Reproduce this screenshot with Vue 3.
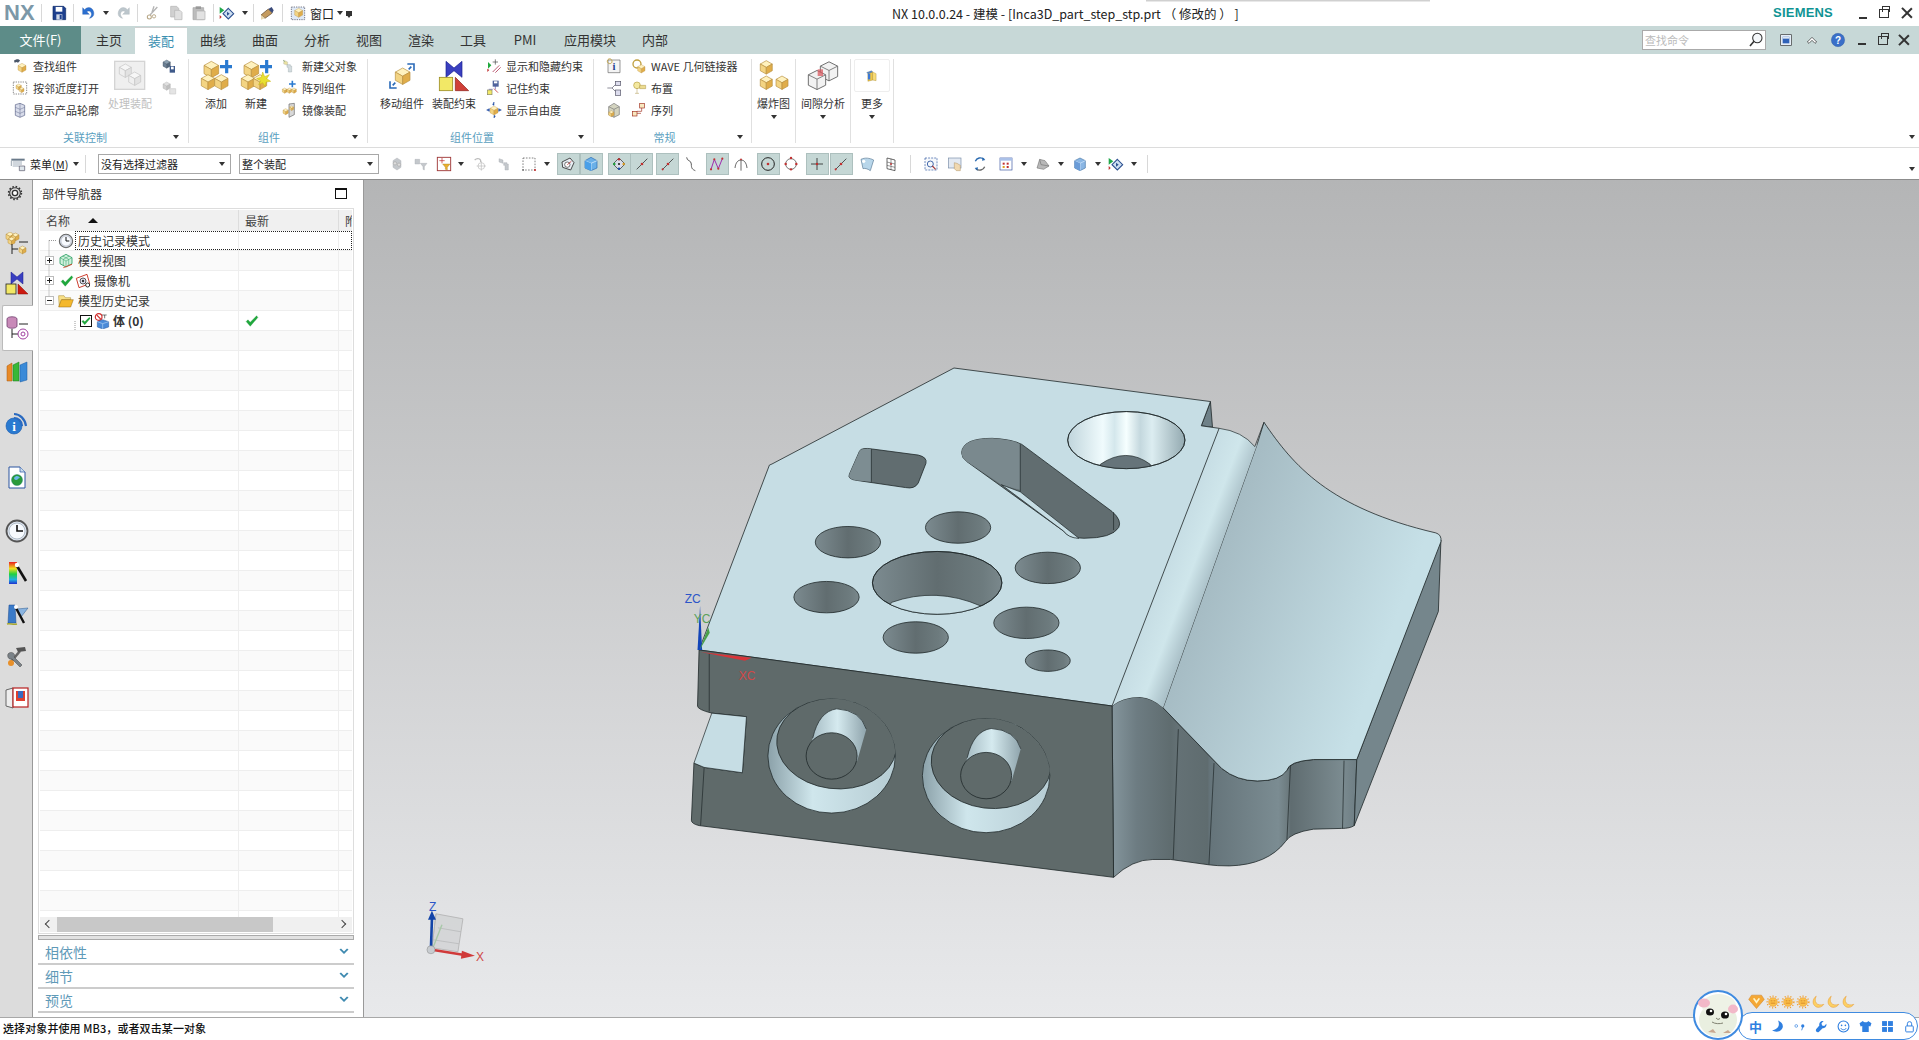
<script setup>
import { h } from 'vue'

const P = (d, f = 'none', s = 'none', w = 1) => `<path d="${d}" fill="${f}" stroke="${s}" stroke-width="${w}"/>`
const C = (x, y, r, f = 'none', s = 'none', w = 1) => `<circle cx="${x}" cy="${y}" r="${r}" fill="${f}" stroke="${s}" stroke-width="${w}"/>`
const cube = (x, y, s, t = '#fff2bf', l = '#f3d483', r = '#e0ad4a', e = '#b8903f') =>
  P(`M${x} ${y + s * 0.28}L${x + s * 0.5} ${y}L${x + s} ${y + s * 0.28}L${x + s * 0.5} ${y + s * 0.56}Z`, t, e, 0.5) +
  P(`M${x} ${y + s * 0.28}L${x + s * 0.5} ${y + s * 0.56}V${y + s * 1.12}L${x} ${y + s * 0.84}Z`, l, e, 0.5) +
  P(`M${x + s} ${y + s * 0.28}L${x + s * 0.5} ${y + s * 0.56}V${y + s * 1.12}L${x + s} ${y + s * 0.84}Z`, r, e, 0.5)
const gcube = (x, y, s) => cube(x, y, s, '#f6f6f6', '#efefef', '#e2e2e2', '#c4c4c4')
const wire = (cx, cy, s, e = '#666') =>
  P(`M${cx - s / 2} ${cy - s * 0.3}L${cx} ${cy - s * 0.55}L${cx + s / 2} ${cy - s * 0.3}V${cy + s * 0.3}L${cx} ${cy + s * 0.55}L${cx - s / 2} ${cy + s * 0.3}Z`, '#f2f2f2', e, 0.7) +
  P(`M${cx - s / 2} ${cy - s * 0.3}L${cx} ${cy - s * 0.05}L${cx + s / 2} ${cy - s * 0.3}M${cx} ${cy - s * 0.05}V${cy + s * 0.55}`, 'none', e, 0.6)
const plus = (x, y) => P(`M${x - 1.2} ${y - 5}h2.4v3.8h3.8v2.4h-3.8v3.8h-2.4v-3.8h-3.8v-2.4h3.8z`, '#2a7ad0')
const bowtie = P('M6 1l6 5 6-5v12l-6-5-6 5z', '#3a3fc0', '#1a1f90', 0.5)
const check = P('M2 13l3-3 4 4L20 3l2 3L9 21z', '#1fa83c', '#0f8a2a', 0.5)
const gy = (d) => P(d, '#c4c8cc', '#a8acb0', 0.6)

const I = {
  save: P('M3 2h16l3 3v17H3z', '#1d3f8e', '#0d2a66') + P('M7 3h10v7H7z', '#fff') + P('M8 14h9v8H8z', '#cfd8e8') + P('M13 15h3v6h-3z', '#1d3f8e'),
  undo: P('M4 4v10h10l-4-4c3-2 6-1 7 2 1 3-1 6-3 8 6-1 8-6 6-11-2-6-9-7-13-2z', '#2b6fd0', '#1a4fa0', 0.5),
  redo: '<g transform="matrix(-1 0 0 1 24 0)">' + P('M4 4v10h10l-4-4c3-2 6-1 7 2 1 3-1 6-3 8 6-1 8-6 6-11-2-6-9-7-13-2z', '#bcc6cc', '#a4aeb4', 0.5) + '</g>',
  cut: P('M20 3L9 15M15 2l-3 9', 'none', '#b4b4b4', 2) + C(8, 18, 3, 'none', '#b8a888', 1.6) + C(15, 17, 2.5, 'none', '#b8a888', 1.4),
  copy: P('M4 2h9l3 3v13H4z', '#d0d0d0', '#b4b4b4') + P('M10 8h8l3 3v11H10z', '#e0e0e0', '#b4b4b4'),
  paste: P('M3 4h16v18H3z', '#bcbcbc', '#a4a4a4') + P('M7 2h8v4H7z', '#999') + P('M8 9h13v13H8z', '#e2e2e2', '#b0b0b0'),
  sel: P('M14 5l8 8-8 8-8-8z', '#cfe0f2', '#2b4f8f', 1.6) + P('M1 3l7 5-7 5z', '#22a84a') + P('M1 15l3 3-3 3z', '#c03030') + P('M12 10l4 3-4 3z', '#2b4f8f'),
  brush: P('M3 15L14 6l6 6-11 8z', '#c49a5c', '#5a4428') + P('M14 6l5-3 3 5-2 4z', '#3a4a7a') + P('M3 15l6 5-6 2z', '#e8d8b0'),
  win: '<rect x="2" y="3" width="20" height="19" fill="#dfe9f6" stroke="#445" stroke-width="1" stroke-dasharray="2 1.5"/>' + cube(7, 5, 12),
  search: C(14, 9, 7, '#f4f7fa', '#333', 1.6) + P('M9 14l-6 7', 'none', '#333', 2.4),
  restoreWin: '<rect x="4" y="4" width="16" height="16" fill="#e6eef8" stroke="#333"/><rect x="7" y="7" width="10" height="10" fill="#2f62b8"/><rect x="7" y="7" width="10" height="3" fill="#dce6f4"/>',
  up: P('M5 15l7-7 7 7-2.5 2L12 12.5 7.5 17z', '#fff', '#222', 1),
  help: C(12, 12, 10, '#3a6fc8', '#2a55a0', 0.6) + '<text x="12" y="17.5" text-anchor="middle" font-size="15" font-weight="700" font-family="Liberation Sans" fill="#fff">?</text>',
  find: cube(9, 8, 12) + P('M3 4c3-3 8-3 9 0l-3 3-2-1-3 1z', '#4a5668'),
  prox: '<rect x="2" y="3" width="20" height="18" fill="none" stroke="#555" stroke-dasharray="2 1.5"/>' + cube(6, 6, 8) + cube(11, 11, 7),
  outline: P('M5 4l7-2 7 3v15l-7 3-7-3z', '#d8dcea', '#5a6488', 1) + P('M12 2v21M5 8l7 3 7-3M5 14l7 3 7-3', 'none', '#5a6488', 0.7),
  proc: '<rect x="0.5" y="1" width="22.5" height="21" fill="#efefef" stroke="#d4d4d4"/>' + gcube(4, 3, 9) + gcube(11, 9, 9),
  cam1: cube(3, 3, 11, '#8ca0b0', '#6c8094', '#54687c', '#3a4a5a') + '<rect x="13" y="12" width="8" height="10" fill="#3f5a8a"/><rect x="15" y="13" width="4" height="4" fill="#fff"/>',
  cam2: cube(3, 3, 11, '#e0e0e0', '#d0d0d0', '#c0c0c0', '#aaa') + P('M13 13h9v8h-9z', '#e4e4e4', '#ccc'),
  addBig: cube(3, 1, 11) + cube(1, 11, 10) + cube(11, 11, 10) + plus(20, 5),
  newBig: cube(3, 1, 11) + cube(1, 11, 10) + cube(10, 11, 10) + plus(20, 5) + P('M17 9l1.5 3.5L22 11l-2 3 3 2-3.5.5L19 20l-2-3-3 1.5 1.5-3-3-1.5 3.5-1z', '#e8e030', '#c8b818', 0.4),
  parent: P('M4 3l6 3v5l-6-2z', '#e8e0a0', '#aaa', 0.5) + P('M9 10h5v2h2v9h-5v-7H9z', '#d4dce0', '#9aa', 0.6) + P('M3 3l3 3', 'none', '#8a8', 1),
  array: cube(2, 12, 7) + cube(9, 12, 7) + cube(16, 12, 7) + plus(17, 6),
  mirror: cube(3, 10, 8) + P('M12 3l8-1v17l-8 4z', '#d8d8d8', '#666') + cube(13, 6, 6),
  move: P('M16 3h5v5M3 16v5h5', 'none', '#2a6ab8', 1.2) + P('M19 5l-2 2M5 19l2-2', 'none', '#2a6ab8', 1.2) + cube(7, 6, 11),
  cons: bowtie + '<rect x="1" y="13" width="10" height="10" fill="#f2e866" stroke="#998a20" stroke-width="0.6"/>' + P('M13 13l10 10H13z', '#d04038', '#8a2018', 0.5),
  showc: P('M3 6l5 5-5 5z', '#1fa83c') + P('M2 16l3 2-3 3z', '#c03030') + P('M14 2v8M10 6h8', 'none', '#444', 1) + P('M10 21l10-10M14 22l8-8', 'none', '#b8506a', 1.4),
  rem: '<rect x="10" y="1" width="9" height="9" fill="#50649c"/><rect x="12" y="2" width="5" height="3" fill="#fff"/>' + P('M4 14h6M14 8v6', 'none', '#55a', 1) + '<rect x="2" y="15" width="7" height="7" fill="#f2e866" stroke="#886"/>' + P('M12 13l6 6', 'none', '#c03030', 1.2),
  dof: cube(6, 6, 12) + P('M12 0v5l-2-1zM1 12l4-2v4zM23 12l-4 2v-4zM12 24v-4l2 1z', '#2a55a8', '#2a55a8', 0.8),
  info: P('M3 3h18v19H3z', '#f4f4f4', '#666') + '<text x="12" y="18" text-anchor="middle" font-size="16" font-weight="700" font-family="Liberation Serif" fill="#1f3f8e">i</text>' + P('M2 5c0-5 7-5 7 0s-7 4-7 0z', 'none', '#c0a040', 1.4),
  wave: C(9, 9, 6, 'none', '#c0a040', 2) + cube(10, 10, 11),
  link: P('M2 12h7M9 12l6-6M9 12l6 6', 'none', '#556', 1) + '<rect x="14" y="2" width="8" height="6" fill="#dde" stroke="#556"/><rect x="14" y="15" width="8" height="8" fill="#dde" stroke="#556"/>',
  layout: C(9, 8, 5, '#f3e8a0', '#b8a040') + P('M9 12v8M6 20h6M13 8h9v5h-9z', '#ecdc90', '#a89040', 0.7),
  pack: P('M4 7l8-5 8 5v12l-8 4-8-4z', '#d4d4c0', '#777') + P('M4 7l8 4 8-4M12 11v12', 'none', '#777') + cube(4, 13, 8),
  seq: '<rect x="13" y="2" width="7" height="7" fill="#f8e8c0" stroke="#a03020"/><rect x="2" y="14" width="7" height="7" fill="#f8e8c0" stroke="#a03020"/>' + P('M16 9v5h-7M9 17h6', 'none', '#a03020', 1),
  expl: cube(1.7, 0.5, 9) + cube(1.7, 12, 9) + cube(13.5, 12, 9),
  clear: wire(16.5, 8.5, 13) + wire(7.5, 15, 13) + '<rect x="8" y="7" width="4" height="5" fill="#d85a60" opacity=".75"/>',
  more: P('M5 8l8-3v14l-8 2z', '#f2c744', '#a08020', 0.7) + P('M5 8l-2-2 8-3 2 2z', '#5a8ad0', '#356', 0.5) + P('M13 5l6 3v12l-6-1z', '#f8dc78', '#a08020', 0.6) + P('M5 8h4v10H5z', '#3a78d8'),
  menu: P('M2 4h20v3H2z', '#6a7a8a') + P('M4 9h14M4 12h14M4 15h10', 'none', '#8a9aaa', 1.2) + P('M14 15h8v7h-8z', '#dfe6ec', '#556') + P('M2 7v8', 'none', '#6a7a8a', 1),
  t1: gy('M6 7l6-4 6 4v10l-6 4-6-4z') + C(9, 11, 2.5, '#ddd', '#aaa') + C(15, 13, 2.5, '#ddd', '#aaa'),
  t2: gy('M3 5h7v7H3zM11 11h10l-4 5v5l-2-1v-4z'),
  t3: '<rect x="2" y="2" width="20" height="20" fill="#fff" stroke="#a03a3a" stroke-width="1.4"/>' + P('M10 12h11l-4 5v4l-3-1v-3z', '#e8b030', '#a07010', 0.5) + P('M9 3v8M5 7h8', 'none', '#c03030', 1.1),
  t4: P('M4 6c4-4 10-2 9 3', 'none', '#bbb', 1.8) + C(14, 15, 5, 'none', '#bbb', 1) + P('M14 8v14M7 15h14', 'none', '#bbb', 1),
  t5: gy('M3 4l6 2v5l-6-2z') + gy('M10 10h5v2h2v9h-5v-7h-2z'),
  t6: '<rect x="3" y="3" width="18" height="18" fill="none" stroke="#444" stroke-dasharray="2.4 2"/>' + C(21, 21, 1.6, '#c03030') + C(3, 21, 1.4, '#777'),
  t7: P('M3 9l12-6 6 7-5 11-12-4z', '#e8eef4', '#333', 1.3) + C(11, 13, 4, '#fff', '#333') + P('M11 13l6-5', 'none', '#c03030', 1.2),
  t8: P('M3 7l9-5 9 5v11l-9 4-9-4z', '#6ab0e8', '#2a6ab0', 1) + P('M12 11l9-4M12 11L3 7M12 11v11', 'none', '#eaf6ff', 1) + P('M3 7l9 4v11l-9-4z', '#4aa0e8', 'none'),
  t9: P('M12 3l9 9-9 9-9-9z', '#d8dce8', '#222', 1) + C(12, 5, 1.8, '#c03030') + C(5, 12, 1.8, '#1fa83c') + C(19, 12, 1.8, '#e0a020') + C(12, 19, 1.8, '#2050b0') + C(12, 12, 1.6, '#222'),
  l1: P('M4 20L20 4', 'none', '#333', 1.2) + C(12, 12, 2, '#c03030'),
  l2: P('M4 20L20 4', 'none', '#333', 1.2) + C(12, 12, 2, '#c03030') + C(4, 20, 1.6, '#c03030'),
  curve: P('M7 2c0 6 7 4 7 10s1 8 6 10', 'none', '#444', 1.3),
  zig: P('M3 20L8 5l6 14 6-15', 'none', '#a02bb0', 1.5) + C(3, 20, 1.6, '#c03030') + C(8, 5, 1.6, '#c03030') + C(14, 19, 1.6, '#c03030') + C(20, 4, 1.6, '#c03030'),
  arcp: P('M3 18c1-9 5-12 9-12s8 3 9 12M12 6v16', 'none', '#444', 1.2) + C(12, 5, 1.4, '#c03030'),
  circ: C(12, 12, 9.5, 'none', '#222', 1.5) + C(12, 12, 2, '#c03030'),
  circ2: C(12, 12, 8, 'none', '#555', 1.2) + C(12, 3, 1.8, '#c03030') + C(4, 12, 1.8, '#c03030') + C(20, 12, 1.8, '#c03030') + C(12, 20, 1.8, '#c03030'),
  cross: P('M12 3v18M3 12h18', 'none', '#222', 1.2) + C(12, 12, 1.8, '#c03030'),
  surf: P('M3 5c6-3 13-2 19 1l-5 16c-4-3-9-4-11-3z', '#b8d6ea', '#5a7a96') + C(7, 8, 2.5, '#fff'),
  grid: P('M6 3l12 3v16L6 19z', '#fff', '#444', 1.2) + P('M12 4v17M6 9l12 3M6 14l12 3', 'none', '#444', 0.8) + C(12, 12, 1.4, '#c03030'),
  v1: '<rect x="3" y="3" width="18" height="18" fill="#f6f8fb" stroke="#2a55a0" stroke-dasharray="3 1.6"/>' + C(11, 12, 4.5, 'none', '#2a55a0', 1.3) + P('M14 15l5 5', 'none', '#a03030', 1.6),
  v2: '<rect x="2" y="3" width="19" height="15" fill="#e3e9f2" stroke="#7a8ea8"/>' + P('M11 10v9l3 3h6v-8l-5-3z', '#f0d8b0', '#a08050', 0.6),
  v3: P('M5 8a8 8 0 0 1 13-3', 'none', '#2a6ab0', 2) + P('M19 16a8 8 0 0 1-13 3', 'none', '#666', 2) + P('M16 2l4 4-5 1zM8 22l-4-4 5-1z', '#2a6ab0'),
  v4: '<rect x="3" y="3" width="18" height="18" fill="#fff" stroke="#3a55a0"/><rect x="3" y="3" width="18" height="4" fill="#aac0e8"/><rect x="7" y="10" width="3" height="3" fill="#c03030"/><rect x="13" y="10" width="3" height="3" fill="#c03030"/><rect x="7" y="15" width="3" height="3" fill="#e0a020"/><rect x="13" y="15" width="3" height="3" fill="#c03030"/>',
  v5: P('M3 18l4-13 8 2 6 8-8 5z', '#b8b8b8', '#666', 0.8) + P('M7 5l2 8 12 2', 'none', '#666', 0.8),
  v6: P('M4 7l8-4 8 4v11l-8 4-8-4z', '#8ab6e4', '#4a78a8') + P('M4 7l8 4 8-4M12 11v11', 'none', '#d8ecff') + P('M4 7l8 4v11l-8-4z', '#6a9cd8'),
  gear: C(12, 12, 4, '#fff', '#333', 2) + C(12, 12, 8, 'none', '#333', 1.6) + '<circle cx="12" cy="12" r="9.6" fill="none" stroke="#333" stroke-width="2.4" stroke-dasharray="2.4 2.6"/>',
  rAsm: cube(1, 0, 8) + cube(7, 1, 7) + cube(3, 5, 7) + P('M7 12v10M7 17h6M14 10h9', 'none', '#222', 1) + cube(14, 14, 7),
  rCon: bowtie + '<rect x="1" y="13" width="10" height="10" fill="#f2e866" stroke="#222" stroke-width="0.8"/>' + P('M13 13l10 10H13z', '#cc1a10', '#8a1008', 0.5),
  rPart: P('M2 3c0-3 10-3 10 0v7c0 3-10 3-10 0z', '#c88ab8', '#704070', 0.8) + P('M7 13v9M7 18h6M14 8h9', 'none', '#222', 1) + C(18, 18, 5, 'none', '#a040a0', 1) + C(18, 18, 2, 'none', '#a040a0', 1),
  rBooks: P('M2 6l5-3v18H2z', '#e88a28', '#a85a10', 0.5) + P('M8 5l6-3v19H8z', '#38b838', '#1a7a1a', 0.5) + P('M15 5l7-3v18l-7 2z', '#3a8ad8', '#1a5aa0', 0.5),
  rInfo: C(9, 15, 8, '#2a7ad0', '#1a5ab0', 0.6) + '<text x="9" y="20" text-anchor="middle" font-size="13" font-weight="700" font-family="Liberation Serif" fill="#fff">i</text>' + P('M9 3c6 0 11 5 12 12M9 7c4 0 8 3 8 8', 'none', '#2a6ac0', 2.2),
  rDoc: P('M4 2h11l5 5v16H4z', '#fff', '#2a55a0', 1) + P('M15 2v5h5', '#cde', '#2a55a0', 0.7) + C(12, 15, 5.5, '#2a9a3a', '#176', 0.4) + P('M9 13c2-3 5-2 6 0-2 0-2 2-4 2-1 0-2-1-2-2z', '#6ab8e8'),
  rClock: C(12, 12, 10.5, '#dfe6f0', '#555', 1.8) + C(12, 12, 8, '#f7fafe', '#8a9aaa', 0.6) + P('M12 6v6h6', 'none', '#111', 1.6),
  rColor: '<defs><linearGradient id="rc" x1="0" y1="0" x2="0" y2="1"><stop offset="0" stop-color="#e82020"/><stop offset=".3" stop-color="#f0e020"/><stop offset=".55" stop-color="#20d040"/><stop offset=".8" stop-color="#20b0e0"/><stop offset="1" stop-color="#2030d0"/></linearGradient></defs><rect x="4" y="1" width="8" height="22" fill="url(#rc)"/>' + P('M12 5l9 15', 'none', '#111', 2.6) + C(12, 4, 2.2, '#fff'),
  rBlue: P('M4 2h6l1 18H3z', '#3a7ac8', '#1a4a90', 0.5) + P('M12 6l11-1-7 9z', '#8ab4e0', '#2a5a90', 0.5) + P('M11 5l8 15', 'none', '#111', 2.4) + C(11, 4, 2, '#fff') + P('M2 21c3-1 6 1 10 0', 'none', '#a8a830', 1.4),
  rTools: P('M5 18l10-12', 'none', '#666', 2.6) + P('M11 3l9-1 1 4-8 1z', '#555') + P('M4 8c4-2 7 2 5 4l8 8-2 2-8-8c-3 1-5-2-4-5z', '#7a8288', '#444', 0.5) + C(6, 18, 3, '#e8902a'),
  rDoor: P('M1 4l7-2v20l-7-2z', '#eee', '#666') + '<rect x="8" y="2" width="15" height="19" fill="#fff" stroke="#b82020" stroke-width="1.2"/><rect x="11" y="5" width="9" height="10" fill="#e04030"/><rect x="13" y="5" width="5" height="7" fill="#3a6ac0"/>',
  clock: C(12, 12, 10, '#d4dce6', '#666', 1.6) + C(12, 12, 7.5, '#f8fbff', '#99a', 0.6) + P('M12 6v6h5', 'none', '#111', 1.5),
  mview: P('M12 2l9 5v9l-9 5-9-5V7z', '#d0f0dc', '#1f9a5a', 1.2) + P('M3 7l9 5 9-5M12 12v9M7 4.5l9 5v9M17 4.5l-9 5v9', 'none', '#1f9a5a', 0.7) + P('M8 22l13-5', 'none', '#d84830', 1.4),
  check,
  cam: P('M2 8l16-6 4 14-16 6z', '#fff', '#c83020', 1.4) + C(12, 12, 4.5, '#e0e0f0', '#333', 1.2) + C(12, 12, 1.8, '#333') + C(19, 18, 3, '#fff', '#111', 1.3),
  folder: P('M1 8V4h8l2 3h8v3H6L2 21z', '#f8e088', '#a08020', 0.7) + P('M5 10h18l-4 11H1z', '#f4b82c', '#8a6010', 0.7),
  body: C(7, 6, 5, '#fff', '#d03030', 1.8) + P('M4 3l6 6', 'none', '#d03030', 1.6) + P('M12 3h7M16 3v5', 'none', '#333', 1) + P('M5 13l8-3 9 3v8l-9 3-8-3z', '#4a8ad8', '#1f4f98', 0.7) + P('M5 13l8 3 9-3M13 16v8', 'none', '#c8e0f8', 0.8),
  chev: P('M3 7l9 9 9-9-3-2-6 6-6-6z', '#3f8ab0'),
  diamond: P('M5 3h14l4 6-11 13L1 9z', '#f5a835', '#c87818', 0.6) + P('M7 8l5 7 5-7-2-1-3 4-3-4z', '#fff6c8'),
  sun: C(12, 12, 7.5, '#fbc04a', '#e88a20', 0.8) + '<circle cx="12" cy="12" r="10" fill="none" stroke="#f0a030" stroke-width="2.4" stroke-dasharray="2 3"/>' + P('M8 10h3M13 10h3M8 14h8', 'none', '#c87018', 1.1),
  moon: P('M9 2c-5 9 1 18 13 14-4 6-12 7-16 2C2 14 3 6 9 2z', '#fcd064', '#e89a30', 0.9),
  bMoon: P('M13 1c4 9 0 16-11 18 5 4 15 4 19-4 3-6-2-12-8-14z', '#2f7fe0'),
  bDots: C(6, 11, 2.5, 'none', '#2f7fe0', 1.2) + C(18, 11, 3, '#2f7fe0') + P('M18 13l-2 6', 'none', '#2f7fe0', 1.6),
  wrench: P('M21 7l-4 4-4-1-1-4 4-4c-5-1-9 3-8 8L2 17c-2 3 2 7 5 5l7-7c4 1 8-3 7-8z', '#2f7fe0'),
  smile: C(12, 12, 10, '#fff', '#2f7fe0', 2) + C(8.5, 10, 1.5, '#2f7fe0') + C(15.5, 10, 1.5, '#2f7fe0') + P('M7 15c2 4 8 4 10 0', 'none', '#2f7fe0', 1.8),
  shirt: P('M7 2L1 6l2 6 3-1v11h12V11l3 1 2-6-6-4c-1 3-8 3-10 0z', '#2f7fe0'),
  tiles: '<rect x="2" y="2" width="9" height="9" fill="#2f7fe0"/><rect x="13" y="2" width="9" height="9" fill="#2f7fe0"/><rect x="2" y="13" width="9" height="9" fill="#2f7fe0"/><rect x="13" y="13" width="9" height="9" fill="#2f7fe0"/>',
  lock: '<rect x="5" y="11" width="14" height="11" rx="1.5" fill="none" stroke="#2f7fe0" stroke-width="1.8"/>' + P('M8 11V7a4 4 0 0 1 8 0v4', 'none', '#2f7fe0', 1.8)
}
const Ico = (p) => h('svg', { viewBox: '0 0 24 24', class: 'ico', innerHTML: I[p.n] })

const flow = (items, base = 0) => {
  let end = base
  return items.map((it) => {
    const w = it.sep ? 1 : it.dd ? 7 : it.w || 16
    const left = it.x - w / 2
    const m = left - end
    end = left + w
    return { ...it, w, m }
  })
}
const quick = flow([
  { x: 41.5, sep: 1 }, { x: 59, n: 'save' }, { x: 73, sep: 1 }, { x: 88, n: 'undo' }, { x: 106, dd: 1 }, { x: 124, n: 'redo' }, { x: 137.5, sep: 1 },
  { x: 152, n: 'cut' }, { x: 175.5, n: 'copy' }, { x: 199, n: 'paste' }, { x: 213, sep: 1 }, { x: 227, n: 'sel' }, { x: 245, dd: 1 },
  { x: 253, sep: 1 }, { x: 267, n: 'brush' }, { x: 282, sep: 1 }, { x: 298, n: 'win' }
], 41)
const tools = flow([
  { x: 398, n: 't1' }, { x: 422, n: 't2' }, { x: 445, n: 't3' }, { x: 462, dd: 1 }, { x: 481, n: 't4' }, { x: 506, n: 't5' }, { x: 530, n: 't6' }, { x: 548, dd: 1 },
  { x: 569, n: 't7', on: 1, w: 23 }, { x: 592, n: 't8', on: 1, w: 23 }, { x: 620, n: 't9', on: 1, w: 23 }, { x: 642.5, n: 'l1', on: 1, w: 23 }, { x: 668.5, n: 'l2', on: 1, w: 23 },
  { x: 691, n: 'curve' }, { x: 718, n: 'zig', on: 1, w: 23 }, { x: 742, n: 'arcp' }, { x: 769, n: 'circ', on: 1, w: 23 }, { x: 792, n: 'circ2' },
  { x: 818, n: 'cross', on: 1, w: 23 }, { x: 842, n: 'l2', on: 1, w: 23 }, { x: 868, n: 'surf' }, { x: 892, n: 'grid' }, { x: 911, sep: 1 },
  { x: 932, n: 'v1' }, { x: 956, n: 'v2' }, { x: 981, n: 'v3' }, { x: 1007, n: 'v4' }, { x: 1025, dd: 1 }, { x: 1044, n: 'v5' }, { x: 1061.5, dd: 1 },
  { x: 1081, n: 'v6' }, { x: 1099, dd: 1 }, { x: 1117, n: 'sel' }, { x: 1135, dd: 1 }, { x: 1148, sep: 1 }
], 380)
const tabs = [
  { t: '主页' }, { t: '装配', on: 1 }, { t: '曲线' }, { t: '曲面' }, { t: '分析' }, { t: '视图' }, { t: '渲染' }, { t: '工具' }, { t: 'PMI' }, { t: '应用模块', wide: 1 }, { t: '内部' }
]
const railTop = [193, 244, 283, 328, 372, 423, 477, 531, 573, 615, 657, 698]
const railNames = ['gear', 'rAsm', 'rCon', 'rPart', 'rBooks', 'rInfo', 'rDoc', 'rClock', 'rColor', 'rBlue', 'rTools', 'rDoor']
const rail = railTop.map((y, i) => {
  const size = i === 0 ? 16 : 24
  const prev = i === 0 ? 180 : railTop[i - 1] + (i === 1 ? 8 : 12)
  return { n: railNames[i], size, m: y - size / 2 - prev, on: i === 3, icon: i > 0 }
})
const emptyRows = Array.from({ length: 30 }, (_, i) => i)
const sections = ['相依性', '细节', '预览']
const stars = ['sun', 'sun', 'sun', 'moon', 'moon', 'moon']
</script>

<template>
  <div class="app">
    <div class="shadow-strip"></div>
    <header class="titlebar">
      <span class="nx">NX</span>
      <span class="strip">
        <span v-for="(it, i) in quick" :key="i" class="slot" :class="{ sep: it.sep, dd: it.dd }" :style="{ marginLeft: it.m + 'px', width: it.w + 'px' }">
          <Ico v-if="it.n" :n="it.n" />
        </span>
      </span>
      <span class="win-label">窗口</span>
      <span class="slot dd win-dd"></span>
      <span class="more-dd"></span>
      <span class="title">NX 10.0.0.24 - 建模 - [Inca3D_part_step_stp.prt （ 修改的 ） ]</span>
      <span class="siemens">SIEMENS</span>
      <span class="winbtns top">
        <span class="w-min"></span><span class="w-res"></span><span class="w-x"></span>
      </span>
    </header>

    <nav class="tabs">
      <span class="tab-file">文件(F)</span>
      <span v-for="t in tabs" :key="t.t" class="tab" :class="{ on: t.on, wide: t.wide }">{{ t.t }}</span>
      <span class="tabs-right">
        <span class="searchbox"><span class="ph">查找命令</span><Ico n="search" /></span>
        <Ico n="restoreWin" class="tr1" />
        <Ico n="up" class="tr2" />
        <Ico n="help" class="tr3" />
        <span class="winbtns second">
          <span class="w-min"></span><span class="w-res"></span><span class="w-x"></span>
        </span>
      </span>
    </nav>

    <section class="ribbon">
      <div class="grp g1">
        <div class="gbody">
          <div class="col c1">
            <div class="row"><Ico n="find" /><span>查找组件</span></div>
            <div class="row"><Ico n="prox" /><span>按邻近度打开</span></div>
            <div class="row"><Ico n="outline" /><span>显示产品轮廓</span></div>
          </div>
          <div class="bigbtn disabled w44"><Ico n="proc" class="big" /><span>处理装配</span></div>
          <div class="col c1b">
            <div class="row"><Ico n="cam1" /></div>
            <div class="row"><Ico n="cam2" /></div>
          </div>
        </div>
        <div class="glabel"><span class="gt">关联控制</span><i class="arrow"></i></div>
      </div>
      <i class="gsep"></i>
      <div class="grp g2">
        <div class="gbody">
          <div class="bigbtn w40 first"><Ico n="addBig" class="big" /><span>添加</span></div>
          <div class="bigbtn w40"><Ico n="newBig" class="big" /><span>新建</span></div>
          <div class="col c2">
            <div class="row"><Ico n="parent" /><span>新建父对象</span></div>
            <div class="row"><Ico n="array" /><span>阵列组件</span></div>
            <div class="row"><Ico n="mirror" /><span>镜像装配</span></div>
          </div>
        </div>
        <div class="glabel"><span class="gt">组件</span><i class="arrow"></i></div>
      </div>
      <i class="gsep"></i>
      <div class="grp g3">
        <div class="gbody">
          <div class="bigbtn w52 first"><Ico n="move" class="big" /><span>移动组件</span></div>
          <div class="bigbtn w52"><Ico n="cons" class="big" /><span>装配约束</span></div>
          <div class="col c3">
            <div class="row"><Ico n="showc" /><span>显示和隐藏约束</span></div>
            <div class="row"><Ico n="rem" /><span>记住约束</span></div>
            <div class="row"><Ico n="dof" /><span>显示自由度</span></div>
          </div>
        </div>
        <div class="glabel"><span class="gt">组件位置</span><i class="arrow"></i></div>
      </div>
      <i class="gsep"></i>
      <div class="grp g4">
        <div class="gbody">
          <div class="col c4a">
            <div class="row"><Ico n="info" /></div>
            <div class="row"><Ico n="link" /></div>
            <div class="row"><Ico n="pack" /></div>
          </div>
          <div class="col c4b">
            <div class="row"><Ico n="wave" /><span>WAVE 几何链接器</span></div>
            <div class="row"><Ico n="layout" /><span>布置</span></div>
            <div class="row"><Ico n="seq" /><span>序列</span></div>
          </div>
        </div>
        <div class="glabel"><span class="gt">常规</span><i class="arrow"></i></div>
      </div>
      <i class="gsep"></i>
      <div class="bigbtn g5"><Ico n="expl" class="big" /><span>爆炸图</span><i class="arrow"></i></div>
      <i class="gsep"></i>
      <div class="bigbtn g6"><Ico n="clear" class="big" /><span>间隙分析</span><i class="arrow"></i></div>
      <i class="gsep"></i>
      <div class="bigbtn g7"><span class="morebox"><Ico n="more" /></span><span>更多</span><i class="arrow"></i></div>
      <i class="gsep"></i>
      <i class="arrow far"></i>
    </section>

    <section class="toolbar">
      <Ico n="menu" class="tb-menu" />
      <span class="tb-menu-label">菜单(<u>M</u>)</span>
      <i class="arrow tb-a"></i>
      <i class="tb-sep"></i>
      <span class="select s1">没有选择过滤器<i class="arrow"></i></span>
      <span class="select s2">整个装配<i class="arrow"></i></span>
      <span v-for="(it, i) in tools" :key="i" class="slot tool" :class="{ sep: it.sep, dd: it.dd, on: it.on }" :style="{ marginLeft: it.m + 'px', width: it.w + 'px' }">
        <Ico v-if="it.n" :n="it.n" />
      </span>
      <i class="arrow far"></i>
    </section>

    <main class="main">
      <aside class="rail">
        <span v-for="r in rail" :key="r.n" class="rbtn" :class="{ on: r.on, shifted: r.icon }" :style="{ marginTop: r.m + 'px', height: r.size + 'px' }">
          <Ico :n="r.n" :style="{ width: r.size + 'px', height: r.size + 'px' }" />
        </span>
      </aside>

      <div class="panel">
        <div class="ptitle"><span>部件导航器</span><i class="maxbox"></i></div>
        <div class="ptable">
          <div class="thead">
            <span class="th"><span>名称</span><i class="sort"></i></span>
            <span class="th">最新</span>
            <span class="th last">附</span>
          </div>
          <div class="tbody">
            <svg class="treelines" width="70" height="100">
              <path d="M9 9.5H17M9 9.5V70M35 90V101H41" fill="none" stroke="#999" stroke-dasharray="1 1" />
            </svg>
            <div class="tr sel">
              <span class="td"><span class="cell p18"><Ico n="clock" /><span class="lbl">历史记录模式</span></span></span>
              <span class="td"></span><span class="td"></span>
              <i class="dotted"></i>
            </div>
            <div class="tr alt">
              <span class="td"><span class="cell p5"><i class="exp plus"></i><Ico n="mview" /><span class="lbl">模型视图</span></span></span>
              <span class="td"></span><span class="td"></span>
            </div>
            <div class="tr">
              <span class="td"><span class="cell p5"><i class="exp plus"></i><Ico n="check" class="i14" /><Ico n="cam" /><span class="lbl tight">摄像机</span></span></span>
              <span class="td"></span><span class="td"></span>
            </div>
            <div class="tr alt">
              <span class="td"><span class="cell p5"><i class="exp"></i><Ico n="folder" /><span class="lbl">模型历史记录</span></span></span>
              <span class="td"></span><span class="td"></span>
            </div>
            <div class="tr">
              <span class="td"><span class="cell p40"><span class="chk"><Ico n="check" /></span><Ico n="body" /><span class="lbl strong">体 (0)</span></span></span>
              <span class="td"><Ico n="check" class="i14 col2" /></span><span class="td"></span>
            </div>
            <div v-for="i in emptyRows" :key="i" class="tr" :class="{ alt: i % 2 === 0 }">
              <span class="td"></span><span class="td"></span><span class="td"></span>
            </div>
          </div>
          <div class="hscroll">
            <span class="sc-l"></span>
            <span class="thumb"></span>
            <span class="sc-r"></span>
          </div>
        </div>
        <div class="sash"></div>
        <div v-for="s in sections" :key="s" class="psec"><span>{{ s }}</span><Ico n="chev" /></div>
      </div>

      <div class="viewport">
        <svg class="canvas" viewBox="0 0 1556 837">
          <defs>
            <linearGradient id="gFace" gradientUnits="userSpaceOnUse" x1="985" y1="1030" x2="1352" y2="1126">
              <stop offset="0" stop-color="#a6bcc4" /><stop offset="1" stop-color="#c6e0e7" />
            </linearGradient>
            <linearGradient id="gStrip" gradientUnits="userSpaceOnUse" x1="885" y1="1025" x2="980" y2="1050">
              <stop offset="0" stop-color="#c6dde4" /><stop offset=".55" stop-color="#cfe6eb" /><stop offset="1" stop-color="#a8bec6" />
            </linearGradient>
            <linearGradient id="gSide" gradientUnits="userSpaceOnUse" x1="885" y1="0" x2="1365" y2="0">
              <stop offset="0" stop-color="#84959c" /><stop offset=".1" stop-color="#6d7c82" /><stop offset=".24" stop-color="#5f6c6f" />
              <stop offset=".27" stop-color="#647175" /><stop offset=".39" stop-color="#5f6c6f" /><stop offset=".4" stop-color="#65747a" />
              <stop offset=".68" stop-color="#7b8c92" /><stop offset=".72" stop-color="#6c7a7e" /><stop offset=".73" stop-color="#5f6c70" />
              <stop offset=".94" stop-color="#7b8b90" /><stop offset="1" stop-color="#6e7e84" />
            </linearGradient>
            <linearGradient id="gHole">
              <stop offset="0" stop-color="#7c8b90" /><stop offset=".5" stop-color="#616d70" /><stop offset=".85" stop-color="#6d7b7e" /><stop offset="1" stop-color="#7a888c" />
            </linearGradient>
            <linearGradient id="gCone">
              <stop offset="0" stop-color="#c0d5dc" /><stop offset=".3" stop-color="#f0fbfd" /><stop offset=".4" stop-color="#d4e7ec" />
              <stop offset=".5" stop-color="#f6ffff" /><stop offset=".62" stop-color="#c4d8de" /><stop offset=".72" stop-color="#dcedf1" /><stop offset="1" stop-color="#93a9b0" />
            </linearGradient>
            <linearGradient id="gBore" x1="0" y1="0" x2="1" y2="0">
              <stop offset="0" stop-color="#8ba1a9" /><stop offset=".35" stop-color="#cfe6ec" /><stop offset="1" stop-color="#b6ccd3" />
            </linearGradient>
            <linearGradient id="gStub">
              <stop offset="0" stop-color="#a0b6be" /><stop offset=".5" stop-color="#d5eaef" /><stop offset="1" stop-color="#8fa4ac" />
            </linearGradient>
            <clipPath id="cb"><ellipse cx="335" cy="1165" rx="125" ry="160" /></clipPath>
            <clipPath id="ch"><ellipse cx="542" cy="680" rx="127" ry="88" /></clipPath>
            <clipPath id="cc"><ellipse cx="913" cy="280" rx="115" ry="80" /></clipPath>
          </defs>
          <g class="model" transform="translate(297 160) scale(.5102 .35714)">
            <path class="e" fill="url(#gSide)" d="M885 1025Q905 1000 940 1000Q965 1003 985 1030L1100 1200Q1130 1235 1170 1235Q1215 1235 1228 1205Q1232 1180 1280 1175L1365 1175L1360 1360Q1352 1368 1335 1368L1280 1370Q1235 1380 1225 1405Q1190 1470 1115 1473Q1090 1473 1075 1470L1000 1455L965 1455Q925 1455 888 1505Z" />
            <path class="e" fill="#75868c" d="M1365 1175L1530 560L1525 760L1360 1360Z" />
            <path class="t" d="M1015 1090L1005 1455M1085 1185L1075 1470M1235 1190L1228 1400M1340 1178L1337 1368" />
            <path class="e" fill="url(#gFace)" d="M1183 230C1240 350 1310 470 1520 540Q1532 545 1530 565L1365 1175L1280 1175Q1232 1180 1228 1205Q1215 1235 1170 1235Q1130 1235 1100 1200L985 1030L1170 290Z" />
            <path fill="url(#gStrip)" d="M1095 247Q1140 255 1165 298L1170 290L985 1030Q965 1003 940 1000Q905 1000 885 1025Z" />
            <path class="t" d="M1095 247Q1140 255 1165 298L1183 230" />
            <path class="e" fill="#6f8188" d="M1078 172L1082 244L1060 240Z" />
            <path class="e" fill="#c6dde4" d="M75 868L213 350L218 347L575 78L1078 172L1060 240L1095 247L885 1025Z" />

            <path class="e" fill="#5f6a6a" d="M75 868L885 1025L888 1505L75 1360Q60 1355 60 1345L65 1185L85 1197L160 1212L168 1055L100 1045Q72 1035 72 1025Z" />
            <path fill="#c6dde4" class="t" d="M100 1045L168 1055L160 1212L85 1197L65 1185Z" />
            <path class="t" d="M95 878L95 1040M85 1197L78 1360" />

            <g v-for="dx in [0, 303]" :key="dx" :transform="`translate(${dx} ${dx ? 55 : 0})`">
              <ellipse class="e" cx="335" cy="1165" rx="125" ry="160" fill="url(#gBore)" />
              <g clip-path="url(#cb)">
                <ellipse class="e" cx="345" cy="1130" rx="117" ry="128" fill="#5f6a6a" transform="rotate(-14 345 1130)" />
              </g>
              <path fill="url(#gStub)" d="M298 1115Q310 1040 345 1033Q392 1037 403 1090L385 1180L290 1160Z" />
              <path class="t" d="M298 1115Q310 1040 345 1033Q392 1037 403 1090" />
              <ellipse class="e" cx="335" cy="1165" rx="50" ry="65" fill="#5f6a6a" />
            </g>

            <ellipse class="e hole" cx="367" cy="566" rx="64" ry="44" fill="url(#gHole)" />
            <ellipse class="e hole" cx="583" cy="525" rx="64" ry="44" fill="url(#gHole)" />
            <ellipse class="e hole" cx="759" cy="638" rx="64" ry="44" fill="url(#gHole)" />
            <ellipse class="e hole" cx="325" cy="720" rx="64" ry="44" fill="url(#gHole)" />
            <ellipse class="e hole" cx="717" cy="792" rx="64" ry="44" fill="url(#gHole)" />
            <ellipse class="e hole" cx="500" cy="833" rx="64" ry="44" fill="url(#gHole)" />
            <ellipse class="e hole" cx="759" cy="898" rx="44" ry="30" fill="url(#gHole)" />

            <ellipse class="e" cx="542" cy="680" rx="127" ry="88" fill="url(#gHole)" />
            <g clip-path="url(#ch)">
              <path class="t" fill="#c6dde4" d="M452 735Q540 690 628 745L640 780L440 780Z" />
            </g>
            <ellipse cx="542" cy="680" rx="127" ry="88" fill="none" class="e" />

            <path class="e" fill="#616d70" d="M390 310Q395 300 415 305L505 322Q523 328 520 345L505 400Q498 418 480 413L385 393Q365 390 370 375Z" />
            <path fill="#7d8d92" d="M390 310Q395 302 413 305L413 397L385 393Q365 390 370 375Z" />
            <path class="t" d="M413 305V397" />

            <path class="e" fill="#616d70" d="M590 315Q592 275 650 275Q690 278 708 292L885 480Q905 505 898 525Q885 555 830 555Q800 555 790 535L600 340Q590 330 590 315Z" />
            <path fill="#7a898e" d="M590 315Q592 275 650 275Q690 278 705 292L705 420L668 405L600 340Q590 330 590 315Z" />
            <path class="t" fill="#c6dde4" d="M668 405L705 425L820 555Q800 555 790 535Z" />
            <path class="t" d="M705 292V425M888 482V532" />

            <ellipse class="e" cx="913" cy="280" rx="115" ry="80" fill="url(#gCone)" />
            <g clip-path="url(#cc)">
              <path class="t" fill="#66747a" d="M862 348Q913 298 960 348L960 370L862 370Z" />
            </g>
            <ellipse cx="913" cy="280" rx="115" ry="80" fill="none" class="e" />

            <path fill="#1244b8" d="M72 868L77 745L81 868Z" />
            <path fill="#49a049" d="M76 868L93 805L96 820Z" />
            <path fill="#d8353a" d="M78 874L178 890L165 898Z" />
          </g>
          <text class="ax blue" x="321" y="423">ZC</text>
          <text class="ax green" x="330" y="443">YC</text>
          <text class="ax red" x="375" y="500">XC</text>

          <g transform="translate(-363 -180)">
            <path d="M435 914L462 919L457 952L431 948Z" fill="#cfd0d2" fill-opacity=".7" stroke="#aaa" stroke-width=".7" />
            <path d="M435 914L431 948M437 928L460 932M432 940L458 944" fill="none" stroke="#b4b6b8" stroke-width=".7" />
            <path d="M432 948L441 925" stroke="#a8c8a8" stroke-width="1.4" fill="none" />
            <path d="M430 948L431 919" stroke="#1244a8" stroke-width="2.6" fill="none" />
            <path d="M431 911L427 920H435Z" fill="#1244a8" />
            <path d="M431 950L462 955" stroke="#d03a3a" stroke-width="2.4" fill="none" />
            <path d="M474 956L461 951L460 959Z" fill="#d03a3a" />
            <circle cx="430" cy="950" r="4" fill="#c8ccd0" stroke="#888" stroke-width=".5" />
            <text class="ax blue" x="428" y="911">Z</text>
            <text class="ax red" x="475" y="961">X</text>
          </g>
        </svg>
      </div>
    </main>

    <footer class="status">选择对象并使用 MB3，或者双击某一对象</footer>

    <div class="ime">
      <div class="pill">
        <span class="zh">中</span>
        <Ico n="bMoon" /><Ico n="bDots" /><Ico n="wrench" /><Ico n="smile" /><Ico n="shirt" /><Ico n="tiles" /><Ico n="lock" />
      </div>
      <div class="stars">
        <Ico n="diamond" class="dia" />
        <Ico v-for="(s, i) in stars" :key="i" :n="s" class="star" />
      </div>
      <svg class="avatar" viewBox="0 0 52 52">
        <circle cx="26" cy="26" r="24" fill="#fff" stroke="#3f8be0" stroke-width="2" />
        <ellipse cx="26" cy="31" rx="19" ry="17" fill="#e9efe0" />
        <ellipse cx="27" cy="17" rx="17" ry="12" fill="#eef2e6" />
        <ellipse cx="12" cy="14" rx="6" ry="4.6" fill="#f2b8c8" />
        <ellipse cx="41" cy="20" rx="5" ry="4.4" fill="#f2b8c8" />
        <ellipse cx="18" cy="23" rx="4" ry="3.6" fill="#111" /><circle cx="19" cy="22" r="1.3" fill="#fff" />
        <ellipse cx="33" cy="26" rx="4" ry="3.6" fill="#111" /><circle cx="34" cy="25" r="1.3" fill="#fff" />
        <path d="M24 29l2 1.5 2-1M20 33c3 2 8 2 11 1" fill="none" stroke="#665" stroke-width=".8" />
        <path d="M16 43l5-3 3 4zM31 44l5-3 3 3z" fill="#c8a890" />
      </svg>
    </div>
  </div>
</template>

<style>
html, body { margin: 0; padding: 0; overflow: hidden; background: #fff; }
</style>

<style scoped>
.app {
  position: relative;
  width: 100%;
  height: 100vh;
  min-height: 1040px;
  display: flex;
  flex-direction: column;
  overflow: hidden;
  font-family: "Noto Sans CJK SC", "Open Sans", sans-serif;
  font-size: 11px;
  color: #333;
  background: #fff;
}
.ico { width: 16px; height: 16px; display: block; flex: none; }
.big { width: 32px; height: 32px; }
.arrow {
  display: inline-block;
  flex: none;
  width: 0; height: 0;
  border-left: 3.5px solid transparent;
  border-right: 3.5px solid transparent;
  border-top: 4px solid #333;
}
.shadow-strip {
  position: absolute; left: 1146px; top: 0; width: 284px; height: 2px;
  background: linear-gradient(#c4c4c4, #f4f4f4);
}

/* title bar */
.titlebar { height: 26px; flex: none; display: flex; align-items: center; background: #fff; }
.nx {
  width: 41px; padding-left: 4px; box-sizing: border-box;
  font: 700 22px/26px "Liberation Sans", sans-serif; color: #7c98a8;
}
.strip { display: flex; align-items: center; height: 26px; }
.slot { display: flex; align-items: center; justify-content: center; height: 18px; flex: none; }
.slot.sep { background: #d8d8d8; }
.slot.dd::after {
  content: ""; width: 0; height: 0;
  border-left: 3.5px solid transparent; border-right: 3.5px solid transparent; border-top: 4px solid #333;
}
.win-label { margin-left: 4px; font-size: 12px; color: #222; width: 24px; }
.win-dd { width: 7px; margin-left: 2px; }
.more-dd { margin-left: 3px; width: 6px; height: 1px; background: #333; border-bottom: 4px solid transparent; position: relative; }
.more-dd::after {
  content: ""; position: absolute; left: 0; top: 3px; width: 0; height: 0;
  border-left: 3px solid transparent; border-right: 3px solid transparent; border-top: 4px solid #333;
}
.title { margin-left: 540px; font-size: 12.5px; color: #222; white-space: nowrap; }
.siemens {
  margin-left: auto;
  font: 700 13px/26px "Liberation Sans", sans-serif; color: #0f9494; letter-spacing: .2px;
}
.winbtns { display: flex; align-items: center; position: relative; }
.winbtns.top { margin-left: 26px; width: 60px; height: 26px; }
.w-min { width: 8px; height: 2px; background: #333; margin-top: 9px; margin-right: 12px; }
.w-res { width: 10px; height: 9px; border: 1.5px solid #333; position: relative; margin-right: 12px; box-sizing: border-box; }
.w-res::before { content: ""; position: absolute; left: 2px; top: -4px; width: 8px; height: 6px; border: 1.5px solid #333; border-bottom: none; box-sizing: border-box; }
.w-x { position: relative; width: 12px; height: 12px; }
.w-x::before, .w-x::after { content: ""; position: absolute; left: 5px; top: -1px; width: 1.6px; height: 14px; background: #333; transform: rotate(45deg); }
.w-x::after { transform: rotate(-45deg); }

/* tabs */
.tabs { height: 28px; flex: none; display: flex; background: #c7d8d7; align-items: stretch; }
.tab-file {
  width: 81px; margin-right: 2px; background: #5d8c88; color: #fff;
  font-size: 13px; line-height: 27px; text-align: center;
}
.tab { width: 52px; text-align: center; font-size: 13px; line-height: 27px; color: #333; box-sizing: border-box; }
.tab.wide { width: 78px; }
.tab.on { background: #fff; color: #3a8fb0; margin-top: 1px; line-height: 25px; border-top: 1px solid #cfcfcf; }
.tabs-right { margin-left: auto; display: flex; align-items: center; padding-right: 9px; }
.searchbox {
  width: 124px; height: 20px; box-sizing: border-box; border: 1px solid #aaa; background: #fff;
  display: flex; align-items: center; justify-content: space-between; padding: 0 1px 0 2px;
}
.ph { color: #bbb; font-size: 11px; }
.tr1 { margin-left: 12px; }
.tr2 { margin-left: 10px; }
.tr3 { margin-left: 10px; }
.winbtns.second { margin-left: 12px; }
.winbtns.second .w-min { margin-top: 8px; margin-right: 12px; }
.winbtns.second .w-res { margin-right: 10px; }

/* ribbon */
.ribbon { height: 94px; box-sizing: border-box; flex: none; display: flex; background: #fff; border-bottom: 1px solid #dcdcdc; position: relative; padding-top: 1px; }
.gsep { flex: none; width: 1px; height: 84px; margin-top: 4px; background: #e0e0e0; }
.grp { flex: none; display: flex; flex-direction: column; }
.g1 { width: 188px; } .g2 { width: 178px; } .g3 { width: 225px; } .g4 { width: 157px; }
.gbody { height: 73px; display: flex; }
.glabel { display: flex; align-items: center; height: 20px; color: #5aa0c0; font-size: 11px; }
.gt { text-align: center; flex: none; }
.g1 .gt { width: 170px; } .g1 .arrow { margin-left: 3px; }
.g2 .gt { width: 160px; } .g2 .arrow { margin-left: 3px; }
.g3 .gt { width: 208px; } .g3 .arrow { margin-left: 2px; }
.g4 .gt { width: 141px; } .g4 .arrow { margin-left: 2px; }
.col { display: flex; flex-direction: column; flex: none; }
.row { height: 22px; display: flex; align-items: center; white-space: nowrap; }
.row span { margin-left: 5px; }
.c1 { width: 108px; padding-left: 12px; box-sizing: border-box; }
.c1b { margin-left: 9px; }
.c2 { margin-left: 5px; }
.c3 { margin-left: 6px; } .c3 .row span { margin-left: 4px; }
.c4a { margin-left: 12px; }
.c4b { margin-left: 9px; } .c4b .row span { margin-left: 4px; }
.bigbtn { flex: none; display: flex; flex-direction: column; align-items: center; padding-top: 5px; box-sizing: border-box; white-space: nowrap; line-height: 16px; }
.bigbtn > span:not(.morebox) { margin-top: 3px; }
.bigbtn > .arrow { margin-top: 4px; }
.w44 { width: 44px; } .w40 { width: 40px; } .w52 { width: 52px; }
.g2 .first { margin-left: 7px; }
.g3 .first { margin-left: 8px; }
.disabled { color: #c0c0c0; }
.g5 { width: 43px; } .g6 { width: 54px; } .g7 { width: 42px; }
.morebox {
  width: 36px; height: 33px; box-sizing: border-box; border: 1px solid #eee; border-radius: 2px;
  display: flex; align-items: center; justify-content: center; margin-top: -1px;
}
.morebox .ico { width: 14px; height: 14px; }
.ribbon .far { position: absolute; right: 4px; top: 81px; }

/* toolbar */
.toolbar { height: 32px; box-sizing: border-box; flex: none; display: flex; align-items: center; background: #fff; border-bottom: 1px solid #8c8c8c; position: relative; }
.tb-menu { margin-left: 10px; }
.tb-menu-label { margin-left: 4px; width: 40px; font-size: 11px; color: #222; white-space: nowrap; }
.tb-a { margin-left: 3px; }
.tb-sep { width: 1px; height: 18px; background: #d8d8d8; margin-left: 6px; }
.select {
  flex: none; height: 20px; box-sizing: border-box; border: 1px solid #a8a8a8; background: #fff;
  display: flex; align-items: center; justify-content: space-between; padding: 0 5px 0 2px; font-size: 11px; color: #222;
}
.s1 { width: 133px; margin-left: 12px; }
.s2 { width: 140px; margin-left: 8px; }
.tool { height: 22px; }
.tool.on { background: #c5d7d5; box-shadow: inset 0 0 0 1px #adc0be; }
.tool.sep { height: 18px; }
.toolbar .far { position: absolute; right: 4px; top: 19px; }

/* main */
.main { height: 837px; flex: none; display: flex; }
.rail { width: 32px; flex: none; background: #dcdcdc; display: flex; flex-direction: column; position: relative; z-index: 1; }
.rbtn { position: relative; width: 30px; display: flex; justify-content: center; flex: none; }
.rbtn.shifted { width: 34px; }
.rbtn .ico { position: relative; }
.rbtn.on::before {
  content: ""; position: absolute; left: 2px; right: 1px; top: -11px; bottom: -11px;
  background: #fff; border: 1px solid #bbb; border-right: none; border-radius: 2px 0 0 2px;
}
.panel {
  width: 332px; flex: none; box-sizing: border-box; background: #fff;
  border-left: 1px solid #999; border-right: 1px solid #999;
  padding: 0 9px 4px 5px; display: flex; flex-direction: column;
}
.ptitle { height: 27px; margin-bottom: 1px; flex: none; display: flex; align-items: center; justify-content: space-between; font-size: 12px; color: #333; padding: 0 7px 0 4px; }
.maxbox { width: 12px; height: 11px; box-sizing: border-box; border: 1px solid #111; border-top-width: 2px; }
.ptable { flex: 1; min-height: 0; box-sizing: border-box; border: 1px solid #ddd; padding: 1px; display: flex; flex-direction: column; overflow: hidden; }
.thead { height: 21px; flex: none; display: grid; grid-template-columns: 199px 100px 1fr; background: #f0f0f0; box-sizing: border-box; }
.th { display: flex; align-items: center; padding-left: 6px; font-size: 12px; color: #444; border-right: 1px solid #ddd; overflow: hidden; white-space: nowrap; }
.th.last { border-right: none; }
.sort { margin-left: 18px; width: 0; height: 0; border-left: 5px solid transparent; border-right: 5px solid transparent; border-bottom: 5px solid #111; }
.tbody { flex: 1; min-height: 0; overflow: hidden; position: relative; }
.treelines { position: absolute; left: 0; top: 0; z-index: 1; pointer-events: none; }
.tr { height: 20px; box-sizing: border-box; display: grid; grid-template-columns: 199px 100px 1fr; border-bottom: 1px solid #eee; position: relative; background: #fff; }
.tr.alt { background: #fafafa; }
.td { border-right: 1px solid #eee; display: flex; align-items: center; min-width: 0; }
.td:last-of-type { border-right: none; }
.cell { display: flex; align-items: center; }
.p18 { padding-left: 18px; } .p5 { padding-left: 5px; } .p40 { padding-left: 40px; }
.lbl { margin-left: 4px; font-size: 12px; color: #333; white-space: nowrap; }
.lbl.tight { margin-left: 3px; }
.lbl.strong { font-weight: 700; margin-left: 3px; }
.dotted { position: absolute; left: 35px; right: 0; top: 0; bottom: 0; border: 1px dotted #222; pointer-events: none; }
.exp { width: 9px; height: 9px; box-sizing: border-box; border: 1px solid #bbb; background: #fff; margin-right: 4px; position: relative; z-index: 2; }
.exp::before { content: ""; position: absolute; left: 1px; right: 1px; top: 3px; height: 1px; background: #222; }
.exp.plus::after { content: ""; position: absolute; top: 1px; bottom: 1px; left: 3px; width: 1px; background: #222; }
.i14 { width: 14px; height: 14px; }
.p5 .i14 { margin-left: 2px; margin-right: 1px; }
.chk { width: 12px; height: 12px; box-sizing: border-box; border: 1px solid #111; background: #fff; margin-right: 2px; display: flex; align-items: center; justify-content: center; }
.chk .ico { width: 10px; height: 10px; }
.col2 { margin-left: 6px; }
.hscroll { height: 15px; flex: none; background: #f0f0f0; display: flex; align-items: center; margin-top: 0; position: relative; }
.sc-l, .sc-r { width: 6px; height: 6px; border-left: 1.5px solid #444; border-bottom: 1.5px solid #444; transform: rotate(45deg); position: absolute; left: 6px; top: 4px; box-sizing: border-box; }
.sc-r { transform: rotate(225deg); left: auto; right: 7px; }
.thumb { margin-left: 17px; width: 216px; height: 15px; background: #c8c8c8; }
.sash { height: 5px; flex: none; margin-top: 1px; margin-bottom: 1px; background: #e2e2e2; border: 1px solid #aaa; box-sizing: border-box; }
.psec { height: 24px; flex: none; box-sizing: border-box; display: flex; align-items: center; justify-content: space-between; padding: 0 4px 0 7px; border-bottom: 2px solid #ccc; font-size: 14px; color: #5f9ab8; }
.psec .ico { width: 12px; height: 12px; margin-top: -1px; }

.viewport { flex: 1; min-width: 0; background: linear-gradient(#b4b5b6, #e8e9eb); }
.canvas { display: block; width: 100%; height: 100%; }
.model * { vector-effect: non-scaling-stroke; }
.e { stroke: #20282a; stroke-width: .8; }
.t { stroke: #20282a; stroke-width: .7; fill-opacity: 1; }
path.t:not([fill]) { fill: none; }
.ax { font: 12px "Liberation Sans", sans-serif; }
.blue { fill: #2b55c8; } .green { fill: #5aa05a; } .red { fill: #d04848; }

.status { height: 23px; flex: none; box-sizing: border-box; border-top: 1px solid #a8a8a8; padding-left: 3px; font-size: 11px; line-height: 21px; color: #111; font-weight: 500; letter-spacing: .1px; background: #fff; }

.ime { position: absolute; right: 0; bottom: 0; width: 227px; height: 51px; }
.avatar { position: absolute; left: 0; top: 0; width: 52px; height: 52px; z-index: 2; }
.pill {
  position: absolute; left: 46px; top: 23px; width: 180px; height: 28px; box-sizing: border-box;
  background: #fff; border: 1.5px solid #3f8be0; border-radius: 14px;
  display: flex; align-items: center; gap: 9px; padding-left: 10px;
}
.pill .ico { width: 13px; height: 13px; }
.zh { font-size: 13px; font-weight: 700; color: #2f7fe0; width: 13px; line-height: 13px; }
.stars { position: absolute; left: 56px; top: 4px; display: flex; align-items: center; gap: 1px; }
.dia { width: 17px; height: 17px; }
.star { width: 14px; height: 14px; }
</style>
